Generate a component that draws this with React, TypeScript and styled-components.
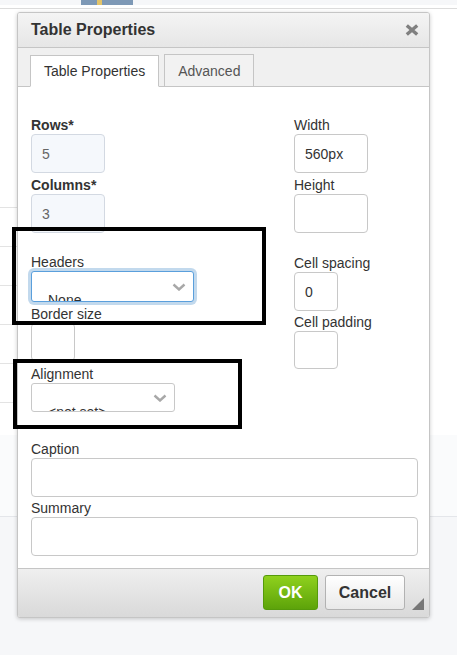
import React from 'react';
import styled, { createGlobalStyle } from 'styled-components';

const GlobalStyle = createGlobalStyle`
  * { box-sizing: border-box; }
  body {
    margin: 0;
    background: #f6f7f9;
    font-family: "Liberation Sans", Arial, sans-serif;
  }
`;

const Page = styled.div`
  position: relative;
  width: 457px;
  height: 655px;
  overflow: hidden;
  background: #f6f7f9;
`;

const TopStrip = styled.div`
  height: 4px;
  border-bottom: 1px solid #dcdcdc;
  background: #fff;
`;

const TabMarker = styled.div`
  width: 52px;
  height: 5px;
  margin-left: 81px;
  background: linear-gradient(90deg, #7e99b6 0 30%, #e3c46a 30% 40%, #7e99b6 40% 100%);
`;

const Sheet = styled.div`
  height: 426px;
  background: #fff;
  padding-top: 160px;
`;

const Band = styled.div`
  height: 82px;
  background: #fafbfc;
  border-bottom: 1px solid #e4e6ea;
`;

const RowLine = styled.div`
  width: 20px;
  height: 39px;
  border-bottom: 1px solid #e3e3e3;
`;

const Dialog = styled.div`
  position: absolute;
  left: 17px;
  top: 12px;
  width: 413px;
  display: flex;
  flex-direction: column;
  background: #fff;
  border: 1px solid #c5c5c5;
  border-radius: 3px;
  box-shadow: 0 1px 4px rgba(0, 0, 0, 0.2);
  overflow: hidden;
  color: #333;
`;

const Head = styled.div`
  height: 35px;
  display: flex;
  align-items: center;
  justify-content: space-between;
  padding: 0 10px 0 13px;
  background: linear-gradient(#f4f4f4, #e6e6e6);
  border-bottom: 1px solid #c5c5c5;
`;

const Title = styled.div`
  font-size: 16px;
  font-weight: bold;
  color: #333;
`;

const TabBar = styled.div`
  height: 39px;
  display: flex;
  align-items: flex-end;
  gap: 5px;
  padding-left: 12px;
  background: #f0f0f0;
  border-bottom: 1px solid #c5c5c5;
`;

const Tab = styled.div<{ $active?: boolean }>`
  height: 32px;
  display: flex;
  align-items: center;
  padding: 0 13px;
  font-size: 14px;
  color: ${(p) => (p.$active ? '#333' : '#555')};
  background: ${(p) => (p.$active ? '#fff' : '#f2f2f2')};
  border: 1px solid #c5c5c5;
  border-bottom: ${(p) => (p.$active ? '1px solid #fff' : 'none')};
  margin-bottom: ${(p) => (p.$active ? '-1px' : '0')};
`;

const Body = styled.div`
  padding: 30px 12px 12px 13px;
`;

const Columns = styled.div`
  display: grid;
  grid-template-columns: 263px 1fr;
`;

const Column = styled.div`
  display: flex;
  flex-direction: column;
  align-items: flex-start;
`;

const Label = styled.div<{ $gap?: number; $bold?: boolean }>`
  height: 16px;
  line-height: 16px;
  margin-top: ${(p) => p.$gap || 0}px;
  margin-bottom: 1px;
  font-size: 14px;
  font-weight: ${(p) => (p.$bold ? 'bold' : 'normal')};
  color: #333;
`;

const Input = styled.div<{ $w: number; $h?: number; $disabled?: boolean }>`
  width: ${(p) => p.$w}px;
  height: ${(p) => p.$h || 39}px;
  display: flex;
  align-items: center;
  padding: 0 10px;
  font-size: 14px;
  color: ${(p) => (p.$disabled ? '#666' : '#333')};
  background: ${(p) => (p.$disabled ? '#f5f8fc' : '#fff')};
  border: 1px solid ${(p) => (p.$disabled ? '#d3d9e2' : '#c8c8c8')};
  border-radius: 4px;
`;

const Select = styled.div<{ $w: number; $h: number; $focus?: boolean; $drop: number }>`
  position: relative;
  width: ${(p) => p.$w}px;
  height: ${(p) => p.$h}px;
  padding: ${(p) => p.$drop}px 0 0 16px;
  font-size: 14px;
  line-height: 16px;
  color: #333;
  background: #fff;
  border: 1px solid ${(p) => (p.$focus ? '#5a9fdc' : '#c8c8c8')};
  border-radius: 3px;
  box-shadow: ${(p) => (p.$focus ? '0 0 0 3px rgba(120, 170, 215, 0.45)' : 'none')};
  white-space: nowrap;
`;

const Clip = styled.div`
  height: 100%;
  overflow: hidden;
`;

const Chevron = styled.svg`
  position: absolute;
  right: 7px;
  top: 50%;
  margin-top: -4px;
`;

const Wide = styled.div`
  margin-top: 29px;
  display: flex;
  flex-direction: column;
`;

const Footer = styled.div`
  position: relative;
  height: 49px;
  display: flex;
  align-items: flex-start;
  justify-content: flex-end;
  gap: 7px;
  padding: 6px 24px 0 0;
  background: linear-gradient(#efefef, #d9d9d9);
  border-top: 1px solid #c5c5c5;
`;

const Button = styled.div<{ $primary?: boolean; $w: number }>`
  width: ${(p) => p.$w}px;
  height: 35px;
  display: flex;
  align-items: center;
  justify-content: center;
  font-size: 16px;
  font-weight: bold;
  border-radius: 3px;
  color: ${(p) => (p.$primary ? '#fff' : '#333')};
  background: ${(p) => (p.$primary ? 'linear-gradient(#8fd11d, #5da30a)' : 'linear-gradient(#fff, #e9e9e9)')};
  border: 1px solid ${(p) => (p.$primary ? '#559a0b' : '#b2b2b2')};
`;

const Resize = styled.svg`
  position: absolute;
  right: 5px;
  bottom: 7px;
`;

const Mark = styled.div<{ $x: number; $y: number; $w: number; $h: number }>`
  position: absolute;
  left: ${(p) => p.$x}px;
  top: ${(p) => p.$y}px;
  width: ${(p) => p.$w}px;
  height: ${(p) => p.$h}px;
  border: 4px solid #000;
`;

const ChevronIcon = () => (
  <Chevron width="14" height="8" viewBox="0 0 14 8">
    <path d="M1.5 1.5 L7 6.5 L12.5 1.5" fill="none" stroke="#a8a8a8" strokeWidth="2.4" />
  </Chevron>
);

export default function App() {
  return (
    <Page>
      <GlobalStyle />
      <TabMarker />
      <TopStrip />
      <Sheet>
        {[0, 1, 2, 3, 4, 5].map((i) => (
          <RowLine key={i} />
        ))}
      </Sheet>
      <Band />

      <Dialog>
        <Head>
          <Title>Table Properties</Title>
          <svg width="14" height="12" viewBox="0 0 14 12">
            <path d="M1.8 1.5 L12.2 10.5 M12.2 1.5 L1.8 10.5" stroke="#808080" strokeWidth="3.4" />
          </svg>
        </Head>
        <TabBar>
          <Tab $active>Table Properties</Tab>
          <Tab>Advanced</Tab>
        </TabBar>
        <Body>
          <Columns>
            <Column>
              <Label $bold>Rows*</Label>
              <Input $w={74} $disabled>5</Input>
              <Label $gap={4} $bold>Columns*</Label>
              <Input $w={74} $disabled>3</Input>
              <Label $gap={21}>Headers</Label>
              <Select $w={163} $h={31} $focus $drop={20}>
                <Clip>None</Clip>
                <ChevronIcon />
              </Select>
              <Label $gap={4}>Border size</Label>
              <Input $w={44} $h={38} />
              <Label $gap={5}>Alignment</Label>
              <Select $w={144} $h={29} $drop={20}>
                <Clip>&lt;not set&gt;</Clip>
                <ChevronIcon />
              </Select>
            </Column>
            <Column>
              <Label>Width</Label>
              <Input $w={74}>560px</Input>
              <Label $gap={4}>Height</Label>
              <Input $w={74} />
              <Label $gap={22}>Cell spacing</Label>
              <Input $w={44}>0</Input>
              <Label $gap={3}>Cell padding</Label>
              <Input $w={44} $h={38} />
            </Column>
          </Columns>
          <Wide>
            <Label>Caption</Label>
            <Input $w={387} />
            <Label $gap={3}>Summary</Label>
            <Input $w={387} />
          </Wide>
        </Body>
        <Footer>
          <Button $primary $w={55}>OK</Button>
          <Button $w={80}>Cancel</Button>
          <Resize width="12" height="12" viewBox="0 0 12 12">
            <path d="M12 0 L12 12 L0 12 Z" fill="#777" />
          </Resize>
        </Footer>
      </Dialog>

      <Mark $x={12} $y={227} $w={254} $h={98} />
      <Mark $x={13} $y={359} $w={229} $h={70} />
    </Page>
  );
}
